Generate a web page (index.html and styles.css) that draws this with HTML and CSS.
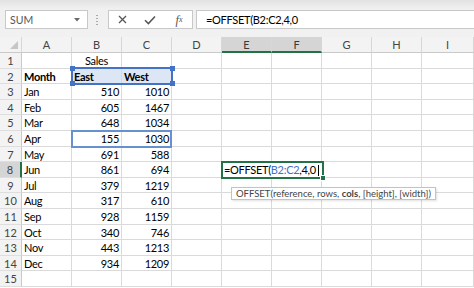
FILE: index.html
```html
<!DOCTYPE html>
<html>
<head>
<meta charset="utf-8">
<link rel="stylesheet" href="styles.css">
</head>
<body>
<div class="toolbar">
  <div class="namebox"><span>SUM</span><svg class="dd" width="6" height="4" viewBox="0 0 6 4"><polygon points="0,0 6,0 3,3.5" fill="#6a6a6a"/></svg></div>
  <div class="dots"></div>
  <div class="fxbtns">
    <span class="btn"><svg width="9" height="9" viewBox="0 0 9 9"><path d="M1 1L8 8M8 1L1 8" stroke="#555" stroke-width="1.3" fill="none"/></svg></span>
    <span class="btn"><svg width="12" height="10" viewBox="0 0 12 10"><path d="M1 5.2L4.4 8.6L11 1.4" stroke="#555" stroke-width="1.5" fill="none"/></svg></span>
    <span class="btn fx"><i>f</i><sub>x</sub></span>
  </div>
  <div class="finput">=OFFSET(B2:C2,4,0</div>
</div>
<div class="sheet">
  <div class="corner"><svg width="22" height="15" viewBox="0 0 22 15"><polygon points="10,12 18,12 18,4" fill="#c6c6c6"/></svg></div>
  <div class="ch">A</div><div class="ch">B</div><div class="ch">C</div><div class="ch">D</div><div class="ch sel">E</div><div class="ch sel">F</div><div class="ch">G</div><div class="ch">H</div><div class="ch">I</div>

  <div class="rh">1</div><div class="c"></div><div class="c ctr">Sales</div><div class="c"></div><div class="c"></div><div class="c"></div><div class="c"></div><div class="c"></div><div class="c"></div><div class="c"></div>
  <div class="rh">2</div><div class="c b">Month</div><div class="c b hl">East</div><div class="c b hl">West</div><div class="c"></div><div class="c"></div><div class="c"></div><div class="c"></div><div class="c"></div><div class="c"></div>
  <div class="rh">3</div><div class="c">Jan</div><div class="c n">510</div><div class="c n">1010</div><div class="c"></div><div class="c"></div><div class="c"></div><div class="c"></div><div class="c"></div><div class="c"></div>
  <div class="rh">4</div><div class="c">Feb</div><div class="c n">605</div><div class="c n">1467</div><div class="c"></div><div class="c"></div><div class="c"></div><div class="c"></div><div class="c"></div><div class="c"></div>
  <div class="rh">5</div><div class="c">Mar</div><div class="c n">648</div><div class="c n">1034</div><div class="c"></div><div class="c"></div><div class="c"></div><div class="c"></div><div class="c"></div><div class="c"></div>
  <div class="rh">6</div><div class="c">Apr</div><div class="c n">155</div><div class="c n">1030</div><div class="c"></div><div class="c"></div><div class="c"></div><div class="c"></div><div class="c"></div><div class="c"></div>
  <div class="rh">7</div><div class="c">May</div><div class="c n">691</div><div class="c n">588</div><div class="c"></div><div class="c"></div><div class="c"></div><div class="c"></div><div class="c"></div><div class="c"></div>
  <div class="rh sel">8</div><div class="c">Jun</div><div class="c n">861</div><div class="c n">694</div><div class="c"></div><div class="c"></div><div class="c"></div><div class="c"></div><div class="c"></div><div class="c"></div>
  <div class="rh">9</div><div class="c">Jul</div><div class="c n">379</div><div class="c n">1219</div><div class="c"></div><div class="c"></div><div class="c"></div><div class="c"></div><div class="c"></div><div class="c"></div>
  <div class="rh">10</div><div class="c">Aug</div><div class="c n">317</div><div class="c n">610</div><div class="c"></div><div class="c"></div><div class="c"></div><div class="c"></div><div class="c"></div><div class="c"></div>
  <div class="rh">11</div><div class="c">Sep</div><div class="c n">928</div><div class="c n">1159</div><div class="c"></div><div class="c"></div><div class="c"></div><div class="c"></div><div class="c"></div><div class="c"></div>
  <div class="rh">12</div><div class="c">Oct</div><div class="c n">340</div><div class="c n">746</div><div class="c"></div><div class="c"></div><div class="c"></div><div class="c"></div><div class="c"></div><div class="c"></div>
  <div class="rh">13</div><div class="c">Nov</div><div class="c n">443</div><div class="c n">1213</div><div class="c"></div><div class="c"></div><div class="c"></div><div class="c"></div><div class="c"></div><div class="c"></div>
  <div class="rh">14</div><div class="c">Dec</div><div class="c n">934</div><div class="c n">1209</div><div class="c"></div><div class="c"></div><div class="c"></div><div class="c"></div><div class="c"></div><div class="c"></div>
  <div class="rh">15</div><div class="c"></div><div class="c"></div><div class="c"></div><div class="c"></div><div class="c"></div><div class="c"></div><div class="c"></div><div class="c"></div><div class="c"></div>

  <div class="range r1"><span class="h tl"></span><span class="h tr"></span><span class="h bl"></span><span class="h br"></span></div>
  <div class="range r2"></div>
  <div class="editor">=OFFSET(<span class="ref">B2:C2</span>,4,0<span class="caret"></span><span class="fh"></span></div>
  <div class="tip">OFFSET(reference, rows, <b>cols</b>, [height], [width])</div>
</div>
</body>
</html>
```
FILE: styles.css
```css
html, body {
  margin: 0;
  padding: 0;
}
body {
  width: 474px;
  height: 288px;
  overflow: hidden;
  background: #fff;
  font-family: Lato, "Liberation Sans", sans-serif;
}
.toolbar {
  height: 37px;
  box-sizing: border-box;
  display: flex;
  align-items: flex-start;
  padding-top: 10px;
  background: linear-gradient(#e2e2e2, #f0f0f0 9px, #f1f1f1);
}
.namebox {
  margin-left: 5px;
  width: 83px;
  height: 19px;
  box-sizing: border-box;
  border: 1px solid #c8c8c8;
  background: #fff;
  display: flex;
  align-items: center;
  justify-content: space-between;
  padding: 0 7px 0 4px;
  font-size: 10.5px;
  color: #555;
}
.dots {
  margin-left: 8px;
  margin-top: 4px;
  width: 2px;
  height: 12px;
  background: radial-gradient(circle, #aaa 0.7px, transparent 1.1px) 0 0 / 2px 3px;
}
.fxbtns {
  margin-left: 10px;
  width: 85px;
  height: 19px;
  box-sizing: border-box;
  border: 1px solid #c8c8c8;
  background: #fff;
  display: grid;
  grid-template-columns: 26px 30px 28px;
  align-items: center;
}
.btn {
  display: flex;
  justify-content: center;
  align-items: center;
}
.fx {
  font-family: "Liberation Serif", serif;
  color: #555;
  font-size: 12px;
  line-height: 12px;
}
.fx sub {
  font-size: 8px;
  font-style: italic;
  vertical-align: -2px;
}
.finput {
  margin-left: 3px;
  flex: 1;
  height: 19px;
  box-sizing: border-box;
  border: 1px solid #c8c8c8;
  border-right: none;
  background: #fff;
  padding-left: 9px;
  font-size: 11px;
  letter-spacing: -0.3px;
  line-height: 17px;
  color: #000;
}
.sheet {
  position: relative;
  display: grid;
  grid-template-columns: 22px repeat(8, 50px) 52px;
  grid-template-rows: 16px repeat(15, 15.6px);
  font-size: 11px;
}
.corner, .ch {
  background: #f3f3f3;
  border-bottom: 1px solid #c9c9c9;
  border-right: 1px solid #d7d7d7;
  box-sizing: border-box;
  text-align: center;
  line-height: 15px;
  color: #444;
}
.corner svg {
  display: block;
}
.ch.sel {
  background: #d5d5d5;
  border-bottom: 2px solid #217346;
  color: #3a3a3a;
}
.rh {
  background: #f3f3f3;
  border-right: 1px solid #c9c9c9;
  border-bottom: 1px solid #dedede;
  box-sizing: border-box;
  text-align: center;
  line-height: 15px;
  color: #444;
}
.rh.sel {
  background: #d5d5d5;
  border-right: 2px solid #217346;
}
.c {
  border-right: 1px solid #dadada;
  border-bottom: 1px solid #dadada;
  box-sizing: border-box;
  padding: 0 2px;
  line-height: 15px;
  white-space: nowrap;
  color: #000;
  letter-spacing: -0.3px;
  overflow: visible;
}
.n { text-align: right; }
.b { font-weight: bold; }
.ctr { text-align: center; }
.hl { background: #dde6f4; }
.range {
  position: absolute;
  box-sizing: border-box;
  pointer-events: none;
}
.r1 {
  left: 71px;
  top: 30px;
  width: 102px;
  height: 17.6px;
  border: 2px solid #4472c4;
}
.r2 {
  left: 71px;
  top: 93px;
  width: 101px;
  height: 17.6px;
  border: 2px solid #6690cf;
}
.h {
  position: absolute;
  width: 5px;
  height: 5px;
  background: #4472c4;
}
.tl { left: -3.5px; top: -3.5px; }
.tr { right: -3.5px; top: -3.5px; }
.bl { left: -3.5px; bottom: -3.5px; }
.br { right: -3.5px; bottom: -3.5px; }
.editor {
  position: absolute;
  left: 221px;
  top: 124.2px;
  width: 103px;
  height: 17.6px;
  box-sizing: border-box;
  border: 2px solid #217346;
  background: #fff;
  padding-left: 1px;
  font-size: 11px;
  letter-spacing: -0.3px;
  line-height: 13.6px;
  color: #000;
  white-space: nowrap;
}
.ref { color: #4472c4; }
.caret {
  display: inline-block;
  width: 1px;
  height: 11px;
  margin-left: 2px;
  background: #000;
  vertical-align: -2px;
}
.fh {
  position: absolute;
  right: -4px;
  bottom: -4px;
  width: 4px;
  height: 4px;
  background: #217346;
  border: 1px solid #fff;
}
.tip {
  position: absolute;
  left: 231px;
  top: 150px;
  height: 13px;
  box-sizing: border-box;
  padding: 0 4px;
  border: 1px solid #c3c3c3;
  background: #fff;
  font-size: 9.5px;
  line-height: 11px;
  color: #444;
  white-space: nowrap;
  box-shadow: 1px 1px 2px rgba(0, 0, 0, 0.12);
}
```
